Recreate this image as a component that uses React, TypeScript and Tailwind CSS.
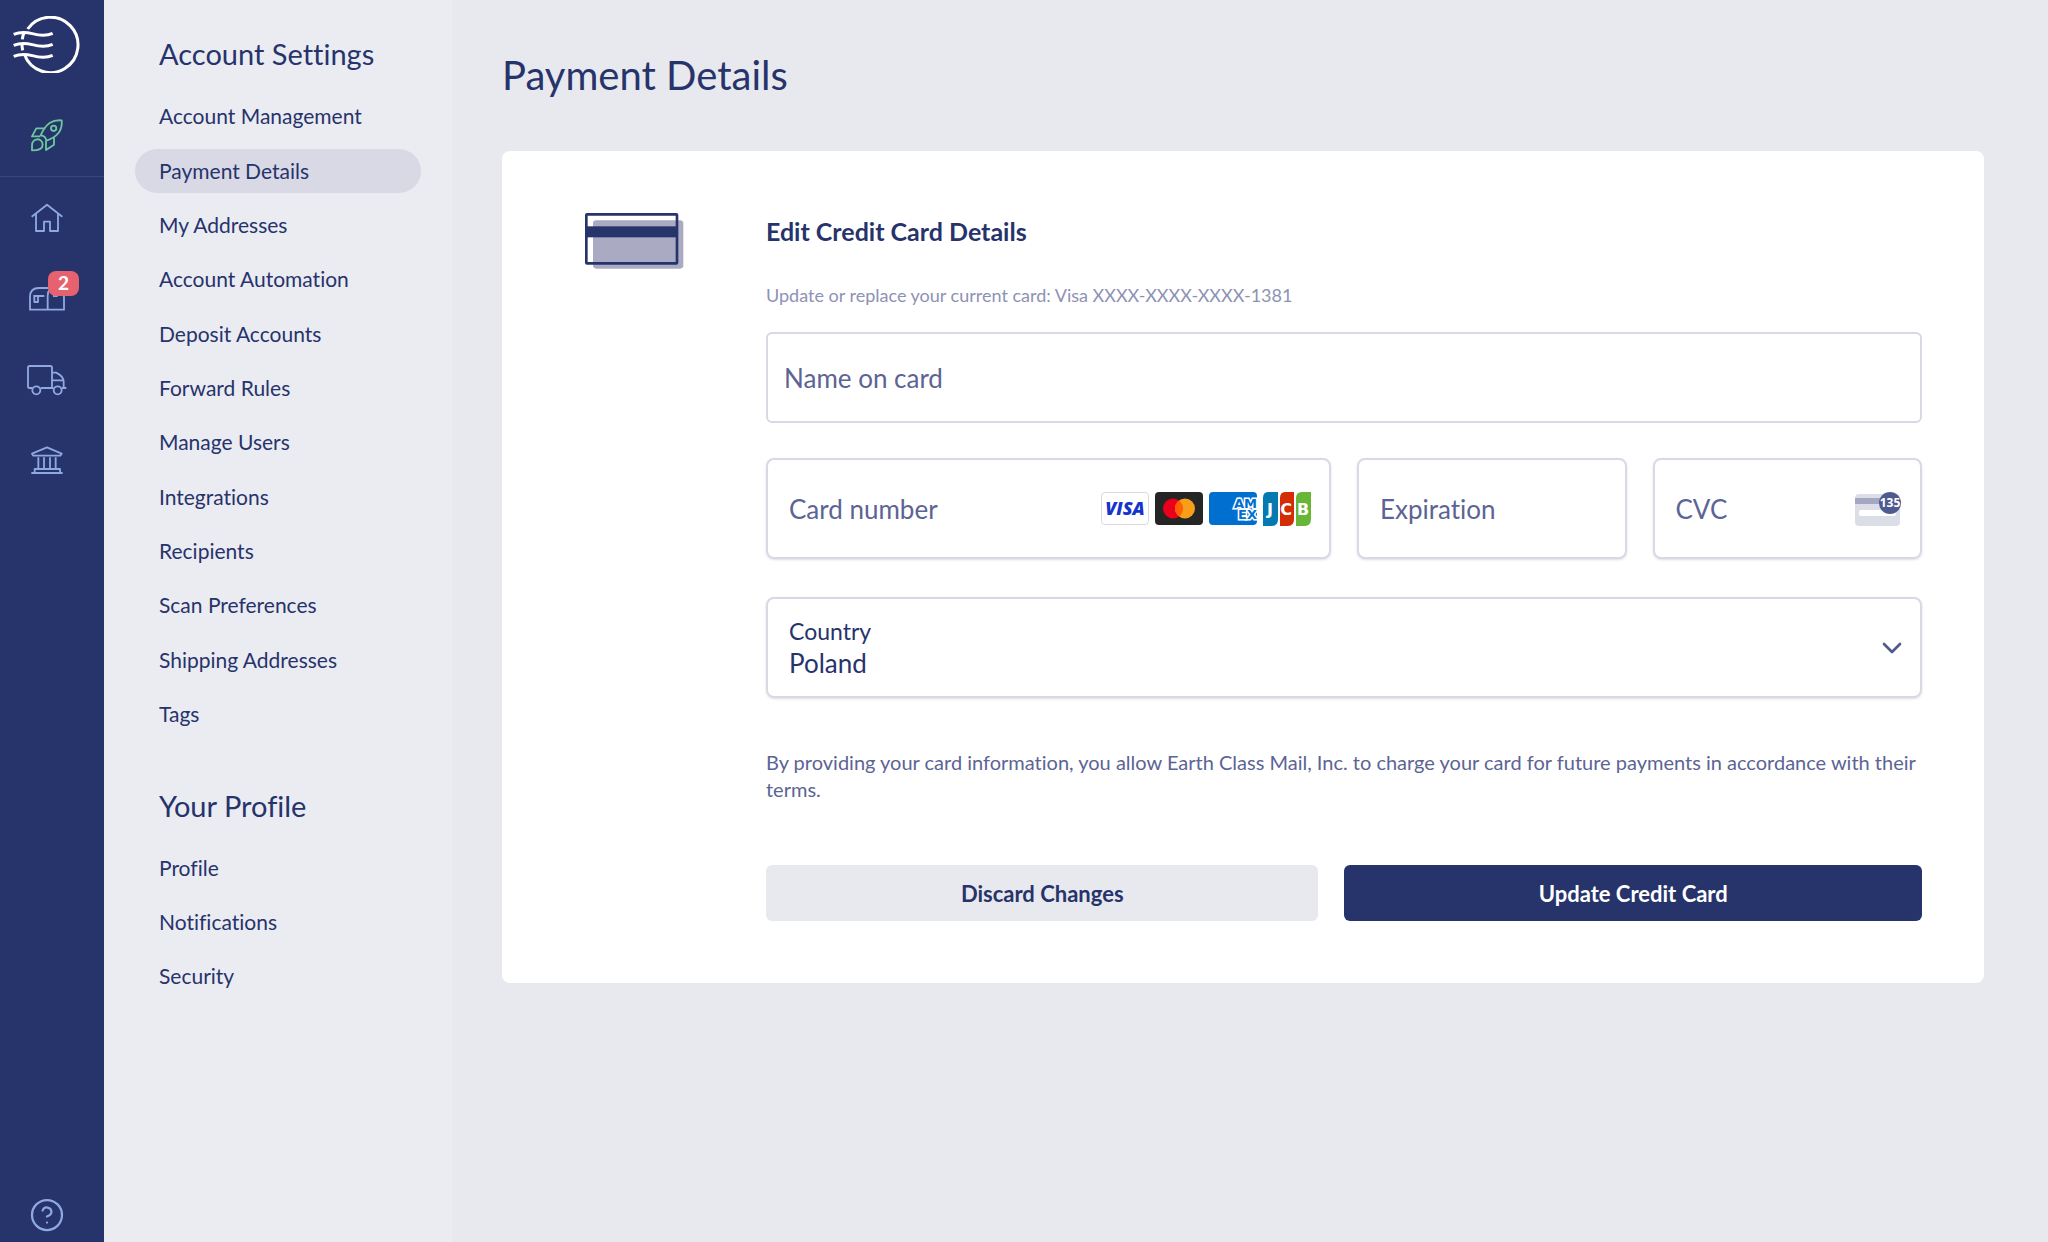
import React, { useState } from 'react';
import { ChevronDown, CircleHelp } from 'lucide-react';

const accountLinks = [
  'Account Management',
  'Payment Details',
  'My Addresses',
  'Account Automation',
  'Deposit Accounts',
  'Forward Rules',
  'Manage Users',
  'Integrations',
  'Recipients',
  'Scan Preferences',
  'Shipping Addresses',
  'Tags',
];

const profileLinks = ['Profile', 'Notifications', 'Security'];

function Logo() {
  return (
    <svg
      width={68}
      height={57}
      viewBox="39 49 204 171"
      fill="none"
      stroke="white"
      strokeWidth="9"
    >
      <path d="M83 88A83 83 0 1 1 73 164" />
      <path d="M73 97Q68 107 67 119M66 133Q66 142 68 152" />
      <path d="M41 104C58 97 78 97 97 102S138 110 158 101" />
      <path d="M41 137C58 130 78 130 97 135S138 143 158 134" />
      <path d="M41 170C58 163 78 163 97 168S138 176 158 167" />
    </svg>
  );
}

function RocketIcon() {
  return (
    <svg
      width={32}
      height={33}
      viewBox="92 357 96 99"
      fill="none"
      stroke="#6cc79c"
      strokeWidth="5.5"
      strokeLinejoin="round"
    >
      <path d="M184 361C158 359 138 368 121 406C131 407 137 413 138 422C174 410 187 390 184 361Z" />
      <circle cx="160" cy="385" r="8" />
      <path d="M132 385H108L95 409H120" />
      <path d="M161 412V434L137 450V422" />
      <path d="M95 451V437C95 412 127 412 127 434C127 446 113 451 95 451Z" />
    </svg>
  );
}

function HomeIcon() {
  return (
    <svg
      width={32}
      height={30}
      viewBox="92 68 96 90"
      fill="none"
      stroke="#8fa8e0"
      strokeWidth="5.5"
      strokeLinejoin="round"
    >
      <path d="M94 109L140 73L186 109" />
      <path d="M107 100V152H131V124H149V152H173V100" />
    </svg>
  );
}

function MailboxIcon() {
  return (
    <svg
      width={36}
      height={24}
      viewBox="88 319 108 72"
      fill="none"
      stroke="#8fa8e0"
      strokeWidth="5.5"
      strokeLinejoin="round"
    >
      <path d="M91 387V349Q91 322 118 322H165Q193 322 193 350V387Z" />
      <path d="M144 387V345Q144 333 152 323" />
      <path d="M101 346H134M104 346V364H115V346M160 346H174" />
    </svg>
  );
}

function TruckIcon() {
  return (
    <svg
      width={40}
      height={31}
      viewBox="80 74 120 93"
      fill="none"
      stroke="#8fa8e0"
      strokeWidth="5.5"
      strokeLinejoin="round"
    >
      <path d="M96 143H87Q83 143 83 139V82Q83 77 88 77H150Q155 77 155 82V143" />
      <path d="M155 97H167Q190 107 190 125V143M155 120H189" />
      <path d="M121 143H159M185 143H198" />
      <circle cx="108" cy="150" r="12" />
      <circle cx="172" cy="150" r="12" />
    </svg>
  );
}

function BankIcon() {
  return (
    <svg
      width={32}
      height={29}
      viewBox="92 317 96 87"
      fill="none"
      stroke="#8fa8e0"
      strokeWidth="5.5"
      strokeLinejoin="round"
    >
      <path d="M140 321L184 340L180 346H99L95 340Z" />
      <path d="M114 351V385M131 351V385M149 351V385M166 351V385" />
      <path d="M103 398V386H179V398M93 398H187" />
    </svg>
  );
}

function CardIcon() {
  return (
    <svg width={99} height={56} viewBox="75 70 297 168" className="shrink-0">
      <rect x="99" y="92" width="271" height="145" rx="10" fill="#aaabc3" />
      <rect
        x="79"
        y="74"
        width="272"
        height="147"
        rx="2"
        fill="none"
        stroke="#27336b"
        strokeWidth="8"
      />
      <rect x="79" y="110" width="272" height="33" fill="#27336b" />
    </svg>
  );
}

function CardBrands() {
  return (
    <div className="flex shrink-0 gap-[6px]">
      <svg width={48} height={33} viewBox="0 0 48 33">
        <rect
          x="0.5"
          y="0.5"
          width="47"
          height="32"
          rx="3.5"
          fill="white"
          stroke="#d8d8e2"
        />
        <text
          x="24"
          y="23"
          textAnchor="middle"
          fill="#1434cb"
          className="font-['Open_Sans',sans-serif] text-[18px] font-extrabold italic"
        >
          VISA
        </text>
      </svg>
      <svg width={48} height={33} viewBox="0 0 48 33">
        <rect width="48" height="33" rx="4" fill="#252525" />
        <circle cx="18" cy="16.5" r="10" fill="#eb001b" />
        <circle cx="30" cy="16.5" r="10" fill="#f79e1b" />
        <path d="M24 8.5A10 10 0 0 1 24 24.5A10 10 0 0 1 24 8.5Z" fill="#ff5f00" />
      </svg>
      <svg width={48} height={33} viewBox="0 0 48 33">
        <rect width="48" height="33" rx="4" fill="#016fd0" />
        <g
          fill="#016fd0"
          stroke="white"
          strokeWidth="3"
          paintOrder="stroke"
          className="font-['DejaVu_Sans',sans-serif] text-[13px] font-bold"
        >
          <text x="25" y="16">
            AM
          </text>
          <text x="29" y="27">
            EX
          </text>
        </g>
      </svg>
      <svg width={48} height={34} viewBox="0 0 48 34">
        <path d="M5 0H15V27Q15 34 9 34H0V6Q0 0 5 0Z" fill="#047ab1" />
        <path d="M22 0H31V27Q31 34 25 34H17V6Q17 0 22 0Z" fill="#d42d06" />
        <path d="M39 0H48V27Q48 34 42 34H33V6Q33 0 39 0Z" fill="#67b637" />
        <g
          fill="white"
          textAnchor="middle"
          className="font-['DejaVu_Sans',sans-serif] text-[16px] font-bold"
        >
          <text x="7" y="23">
            J
          </text>
          <text x="23" y="23">
            C
          </text>
          <text x="40" y="23">
            B
          </text>
        </g>
      </svg>
    </div>
  );
}

function CvcIcon() {
  return (
    <svg width={47} height={36} viewBox="0 0 47 36" className="shrink-0">
      <rect y="3" width="45" height="32" rx="4" fill="#dcdee7" />
      <rect y="7" width="45" height="6" fill="#a5a7c1" />
      <rect x="4" y="19" width="37" height="6" rx="2" fill="white" />
      <circle cx="35" cy="12" r="11" fill="#4f5a8f" />
      <text
        x="35"
        y="16"
        textAnchor="middle"
        fill="white"
        className="font-['Noto_Sans',sans-serif] text-[12px] font-bold"
      >
        135
      </text>
    </svg>
  );
}

function SideLinks({
  links,
  selected,
  onSelect,
}: {
  links: string[];
  selected: string;
  onSelect: (title: string) => void;
}) {
  return (
    <>
      {links.map((title) => (
        <li key={title}>
          <a
            href="#"
            onClick={() => onSelect(title)}
            className={`flex h-11 items-center rounded-full px-6 pb-0.5 text-[21px] ${
              selected === title ? 'bg-[#d9d9e6]' : ''
            }`}
          >
            {title}
          </a>
        </li>
      ))}
    </>
  );
}

function App() {
  const [selected, setSelected] = useState('Payment Details');
  const [country, setCountry] = useState('Poland');

  return (
    <div className="flex min-h-screen bg-[#e8e9ee] font-['Lato',sans-serif] text-[#27336b] [font-variant-ligatures:none]">
      <nav className="flex w-[104px] shrink-0 flex-col items-center bg-[#27336b] pt-4 pb-[9px]">
        <a href="#" aria-label="Dashboard" className="mr-[10px]">
          <Logo />
        </a>
        <a href="#" aria-label="Get started" className="mt-[46px] mr-[10px]">
          <RocketIcon />
        </a>
        <div className="mt-6 h-px w-full bg-[#3a467d]" />
        <a href="#" aria-label="Home" className="mt-[26px] mr-[10px]">
          <HomeIcon />
        </a>
        <a href="#" aria-label="Mail" className="relative mt-[54px] mr-[10px]">
          <MailboxIcon />
          <span className="absolute -top-4 left-[19px] flex h-[25px] w-[31px] items-center justify-center rounded-lg bg-[#e6626f] text-[19px] font-bold text-white">
            2
          </span>
        </a>
        <a href="#" aria-label="Shipments" className="mt-[54px] mr-[10px]">
          <TruckIcon />
        </a>
        <a href="#" aria-label="Deposits" className="mt-[50px] mr-[10px]">
          <BankIcon />
        </a>
        <a
          href="#"
          aria-label="Help"
          className="mt-auto mr-[10px] text-[#8fa8e0]"
        >
          <CircleHelp size={36} strokeWidth={1.5} />
        </a>
      </nav>

      <aside className="w-[348px] shrink-0 bg-[#ebecf2] py-9 pr-[31px] pl-[31px]">
        <h2 className="px-6 text-[29px] leading-9">Account Settings</h2>
        <ul className="mt-[23px] flex min-h-[642px] flex-col justify-between">
          <SideLinks
            links={accountLinks}
            selected={selected}
            onSelect={setSelected}
          />
        </ul>
        <h2 className="mt-[51px] px-6 text-[29px] leading-9">Your Profile</h2>
        <ul className="mt-[23px] flex flex-col gap-[10px]">
          <SideLinks
            links={profileLinks}
            selected={selected}
            onSelect={setSelected}
          />
        </ul>
      </aside>

      <main className="min-w-0 flex-1 pt-[51px] pr-16 pb-16 pl-[50px]">
        <h1 className="text-[40px] leading-[48px]">Payment Details</h1>

        <section className="mt-[52px] flex rounded-lg bg-white pt-[62px] pr-[62px] pb-[62px] pl-[83px]">
          <CardIcon />
          <form
            className="ml-[82px] min-w-0 flex-1"
            onSubmit={(e) => e.preventDefault()}
          >
            <h3 className="text-[25px] leading-9 font-bold">
              Edit Credit Card Details
            </h3>
            <p className="mt-[33px] text-[18px] leading-[26px] text-[#8d92b5]">
              Update or replace your current card: Visa XXXX-XXXX-XXXX-1381
            </p>
            <input
              type="text"
              aria-label="Name on card"
              placeholder="Name on card"
              className="mt-6 h-[91px] w-full rounded-md border-2 border-[#d8d8e6] px-4 text-[26px] placeholder:text-[#5c6494]"
            />

            <div className="mt-[35px] grid grid-cols-2 gap-[26px]">
              <div className="flex h-[101px] items-center rounded-lg border-2 border-[#d8d8e6] pr-[18px] pl-[21px] shadow-sm">
                <input
                  type="text"
                  aria-label="Card number"
                  placeholder="Card number"
                  className="h-full w-full min-w-0 text-[26px] outline-none placeholder:text-[#5c6494]"
                />
                <CardBrands />
              </div>
              <div className="grid grid-cols-2 gap-[26px]">
                <input
                  type="text"
                  aria-label="Expiration"
                  placeholder="Expiration"
                  className="h-[101px] w-full rounded-lg border-2 border-[#d8d8e6] px-[21px] text-[26px] shadow-sm placeholder:text-[#5c6494]"
                />
                <div className="flex h-[101px] items-center rounded-lg border-2 border-[#d8d8e6] pr-[18px] pl-[21px] shadow-sm">
                  <input
                    type="text"
                    aria-label="CVC"
                    placeholder="CVC"
                    className="h-full w-full min-w-0 text-[26px] outline-none placeholder:text-[#5c6494]"
                  />
                  <CvcIcon />
                </div>
              </div>
            </div>

            <div className="relative mt-[38px] h-[101px] rounded-lg border-2 border-[#d8d8e6] pt-4 shadow-sm">
              <label
                htmlFor="country"
                className="block px-[21px] text-[23px] leading-8"
              >
                Country
              </label>
              <select
                id="country"
                value={country}
                onChange={(e) => setCountry(e.target.value)}
                className="block w-full appearance-none px-[21px] text-[26px] leading-8 outline-none"
              >
                <option>Poland</option>
              </select>
              <ChevronDown
                size={32}
                strokeWidth={2}
                className="pointer-events-none absolute top-[33px] right-3 text-[#4f5a8f]"
              />
            </div>

            <p className="mt-[51px] text-[20px] leading-[27px] text-[#5c6494]">
              By providing your card information, you allow Earth Class Mail,
              Inc. to charge your card for future payments in accordance with
              their terms.
            </p>

            <div className="mt-[62px] flex gap-[26px]">
              <button
                type="button"
                className="h-14 flex-[552] rounded-md bg-[#e8e9ee] text-[22px] font-bold"
              >
                Discard Changes
              </button>
              <button
                type="submit"
                className="h-14 flex-[577] rounded-md bg-[#27336b] text-[22px] font-bold text-white"
              >
                Update Credit Card
              </button>
            </div>
          </form>
        </section>
      </main>
    </div>
  );
}

export default App;
